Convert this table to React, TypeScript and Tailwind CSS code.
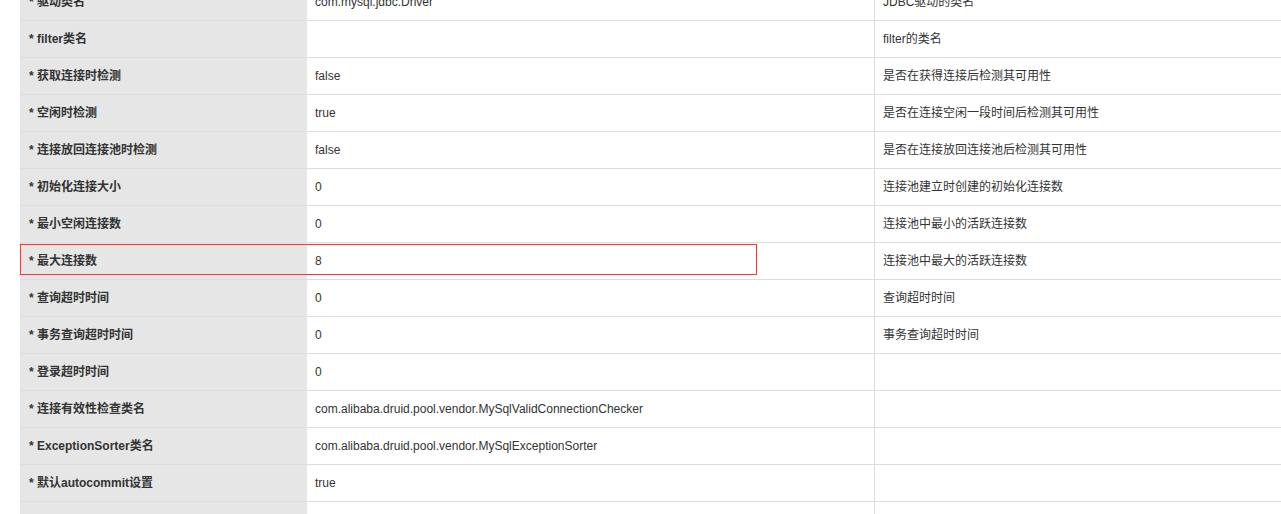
import React from "react";

type Row = { label: string; value: string; desc: string; marked?: boolean };

const rows: Row[] = [
	{ label: "驱动类名", value: "com.mysql.jdbc.Driver", desc: "JDBC驱动的类名" },
	{ label: "filter类名", value: "", desc: "filter的类名" },
	{ label: "获取连接时检测", value: "false", desc: "是否在获得连接后检测其可用性" },
	{ label: "空闲时检测", value: "true", desc: "是否在连接空闲一段时间后检测其可用性" },
	{ label: "连接放回连接池时检测", value: "false", desc: "是否在连接放回连接池后检测其可用性" },
	{ label: "初始化连接大小", value: "0", desc: "连接池建立时创建的初始化连接数" },
	{ label: "最小空闲连接数", value: "0", desc: "连接池中最小的活跃连接数" },
	{ label: "最大连接数", value: "8", desc: "连接池中最大的活跃连接数", marked: true },
	{ label: "查询超时时间", value: "0", desc: "查询超时时间" },
	{ label: "事务查询超时时间", value: "0", desc: "事务查询超时时间" },
	{ label: "登录超时时间", value: "0", desc: "" },
	{ label: "连接有效性检查类名", value: "com.alibaba.druid.pool.vendor.MySqlValidConnectionChecker", desc: "" },
	{ label: "ExceptionSorter类名", value: "com.alibaba.druid.pool.vendor.MySqlExceptionSorter", desc: "" },
	{ label: "默认autocommit设置", value: "true", desc: "" },
	{ label: "", value: "", desc: "" },
];

export default function App() {
	return (
		<div
			className="h-[514px] overflow-hidden bg-white pl-[20px] text-[12px] text-[#333]"
			style={{ fontFamily: '"Liberation Sans", Arial, "Noto Sans CJK SC", sans-serif' }}
		>
			<div className="-mt-[16px]">
				{rows.map((r, i) => (
					<div
						key={i}
						className="relative grid h-[37px] grid-cols-[287px_567px_1fr] border-b border-[#dddddd]"
					>
						<div className="flex items-center bg-[#e6e6e6] pl-[9px] font-bold">
							{r.label && `* ${r.label}`}
						</div>
						<div className="flex items-center pl-[8px]">{r.value}</div>
						<div className="flex items-center border-l border-[#dddddd] pl-[8px]">{r.desc}</div>
						{r.marked && (
							<div className="pointer-events-none absolute top-[1px] left-0 h-[31px] w-[737px] border border-[#ff3333]" />
						)}
					</div>
				))}
			</div>
		</div>
	);
}
